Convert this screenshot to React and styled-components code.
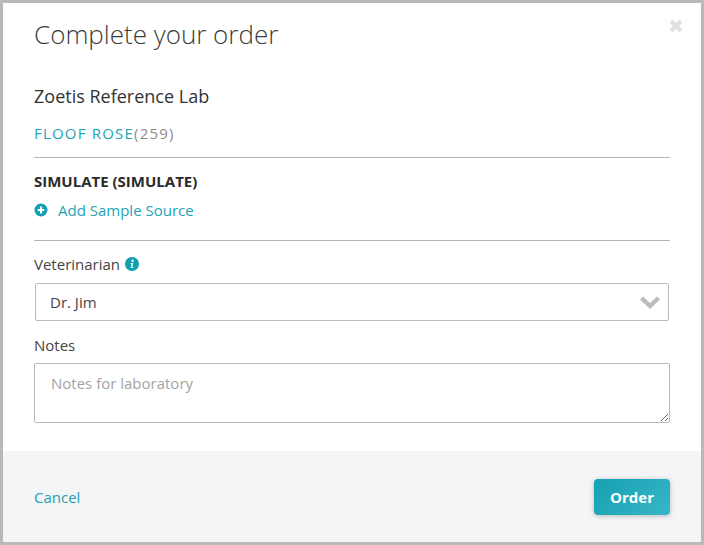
import React from 'react';
import styled, { createGlobalStyle } from 'styled-components';

const GlobalStyle = createGlobalStyle`
  html, body {
    margin: 0;
    padding: 0;
    background: #b9b9b9;
  }
  body {
    font-family: 'Open Sans', 'Liberation Sans', sans-serif;
  }
`;

const Frame = styled.div`
  box-sizing: border-box;
  width: 704px;
  height: 545px;
  padding: 3px;
  background: #b9b9b9;
`;
const Modal = styled.section`
  position: relative;
  display: flex;
  flex-direction: column;
  height: 100%;
  background: #fff;
`;
const CloseButton = styled.div`
  position: absolute;
  top: 14px;
  right: 17px;
  width: 16px;
  height: 16px;
  color: #dfe1e3;
`;
const Body = styled.div`
  flex: 1;
  padding: 14px 31px 0;
`;
const Title = styled.h1`
  margin: 0;
  font-size: 26px;
  font-weight: 300;
  line-height: 34px;
  color: #3c3c3c;
`;
const LabName = styled.div`
  margin-top: 33px;
  font-size: 18px;
  line-height: 24px;
  color: #333;
`;
const Patient = styled.div`
  margin-top: 15px;
  font-size: 15px;
  line-height: 20px;
  letter-spacing: 1.2px;
  color: #1fa3b5;
  padding-bottom: 14px;
  border-bottom: 1px solid #b5b5b5;
  span {
    color: #8b8b8b;
  }
`;
const TestName = styled.div`
  margin-top: 13px;
  font-size: 15px;
  font-weight: 700;
  line-height: 20px;
  color: #2b2b2b;
`;
const AddLink = styled.a`
  display: flex;
  align-items: center;
  gap: 10px;
  margin-top: 9px;
  padding-bottom: 20px;
  font-size: 15px;
  line-height: 20px;
  color: #1fa3b5;
  border-bottom: 1px solid #b5b5b5;
`;
const Label = styled.label`
  display: flex;
  align-items: center;
  gap: 5px;
  margin-top: ${(props) => props.$top};
  font-size: 15px;
  line-height: 20px;
  color: #444;
`;
const SelectBox = styled.div`
  box-sizing: border-box;
  display: flex;
  align-items: center;
  justify-content: space-between;
  height: 38px;
  margin: 9px 1px 0;
  padding: 0 7px 0 14px;
  border: 1px solid #b9b9b9;
  border-radius: 2px;
  font-size: 15px;
  color: #444;
`;
const Notes = styled.textarea`
  display: block;
  box-sizing: border-box;
  width: 100%;
  height: 60px;
  margin-top: 8px;
  padding: 9px 16px;
  border: 1px solid #b9b9b9;
  border-radius: 2px;
  font-family: inherit;
  font-size: 15px;
  line-height: 20px;
  color: #444;
  outline: none;
  &::placeholder {
    color: #a3a3a3;
    opacity: 1;
  }
`;
const Footer = styled.footer`
  display: flex;
  align-items: center;
  justify-content: space-between;
  height: 91px;
  padding: 0 31px;
  background: #f4f5f7;
`;
const CancelLink = styled.a`
  font-size: 15px;
  color: #1f9fb1;
`;
const OrderButton = styled.button`
  width: 76px;
  height: 36px;
  border: 0;
  border-radius: 4px;
  background: linear-gradient(135deg, #16a0b2, #37b6c6);
  box-shadow: 0 1px 5px rgba(0, 0, 0, 0.25);
  color: #fff;
  font-family: inherit;
  font-size: 15px;
  font-weight: 700;
`;

function CloseIcon() {
  return (
    <svg width="16" height="16" viewBox="0 0 16 16">
      <path d="M3 3l10 10M13 3L3 13" stroke="currentColor" strokeWidth="4.4" />
    </svg>
  );
}
function PlusCircle() {
  return (
    <svg width="14" height="14" viewBox="0 0 14 14">
      <circle cx="7" cy="7" r="6.5" fill="#0f9fb2" />
      <path d="M3.6 7h6.8M7 3.6v6.8" stroke="#fff" strokeWidth="2.2" />
    </svg>
  );
}
function InfoCircle() {
  return (
    <svg width="14" height="14" viewBox="0 0 14 14">
      <circle cx="7" cy="7" r="7" fill="#0f9fb2" />
      <circle cx="7.6" cy="3.7" r="1.2" fill="#fff" />
      <path d="M5.7 6h2.5l-.9 4h1v1H5.6l.9-4h-.9z" fill="#fff" />
    </svg>
  );
}
function Chevron() {
  return (
    <svg width="22" height="14" viewBox="0 0 22 14">
      <path d="M2.5 3L11 11l8.5-8" fill="none" stroke="#bcbcbc" strokeWidth="4.4" />
    </svg>
  );
}

export default function App() {
  return (
    <>
      <GlobalStyle />
      <Frame>
        <Modal>
          <CloseButton>
            <CloseIcon />
          </CloseButton>
          <Body>
            <Title>Complete your order</Title>
            <LabName>Zoetis Reference Lab</LabName>
            <Patient>
              FLOOF ROSE<span>(259)</span>
            </Patient>
            <TestName>SIMULATE (SIMULATE)</TestName>
            <AddLink>
              <PlusCircle />
              Add Sample Source
            </AddLink>
            <Label $top="13px">
              Veterinarian
              <InfoCircle />
            </Label>
            <SelectBox>
              Dr. Jim
              <Chevron />
            </SelectBox>
            <Label $top="14px">Notes</Label>
            <Notes placeholder="Notes for laboratory" />
          </Body>
          <Footer>
            <CancelLink>Cancel</CancelLink>
            <OrderButton>Order</OrderButton>
          </Footer>
        </Modal>
      </Frame>
    </>
  );
}
